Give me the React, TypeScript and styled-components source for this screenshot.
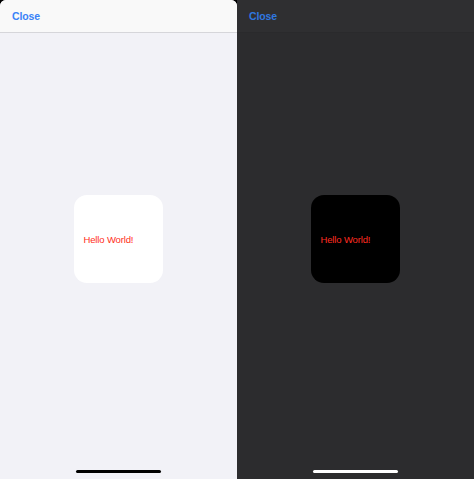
import * as React from "react";
import styled, { createGlobalStyle } from "styled-components";

const GlobalStyle = createGlobalStyle`
  html, body {
    margin: 0;
    padding: 0;
    background: #000000;
  }
  body {
    font-family: "Liberation Sans", Arial, sans-serif;
  }
`;

const Page = styled.div`
  display: flex;
  width: 474px;
  height: 479px;
  overflow: hidden;
`;

const Screen = styled.div<{ $dark?: boolean }>`
  width: 237px;
  height: 479px;
  display: flex;
  flex-direction: column;
  background: ${(p) => (p.$dark ? "#2c2c2e" : "#f2f2f7")};
  border-top-left-radius: ${(p) => (p.$dark ? "0" : "6px")};
  border-top-right-radius: ${(p) => (p.$dark ? "0" : "6px")};
  overflow: hidden;
`;

const Header = styled.div<{ $dark?: boolean }>`
  height: 32px;
  flex-shrink: 0;
  display: flex;
  align-items: center;
  padding-left: 12px;
  background: ${(p) => (p.$dark ? "#2f2f31" : "#f9f9f9")};
  border-bottom: 1px solid ${(p) => (p.$dark ? "#2a2a2c" : "#d6d6da")};
`;

const CloseButton = styled.div<{ $dark?: boolean }>`
  font-size: 10.5px;
  font-weight: 700;
  color: ${(p) => (p.$dark ? "#2f78e0" : "#3a82f7")};
  letter-spacing: -0.1px;
`;

const Body = styled.div`
  flex: 1;
  display: flex;
  flex-direction: column;
  align-items: center;
  padding-top: 162px;
`;

const Card = styled.div<{ $dark?: boolean }>`
  width: 89px;
  height: 88px;
  margin-right: 1px;
  border-radius: 13px;
  background: ${(p) => (p.$dark ? "#000000" : "#ffffff")};
  display: flex;
  align-items: center;
  padding-left: 10px;
  box-sizing: border-box;
`;

const Hello = styled.div`
  font-size: 9.5px;
  letter-spacing: -0.15px;
  color: #ff2d20;
  margin-top: 1px;
`;

const Spacer = styled.div`
  flex: 1;
`;

const HomeIndicator = styled.div<{ $dark?: boolean }>`
  width: 85px;
  height: 3px;
  border-radius: 2px;
  margin: 0 auto 6px;
  background: ${(p) => (p.$dark ? "#ffffff" : "#000000")};
`;

const Modal = ({ dark }: { dark?: boolean }) => (
  <Screen $dark={dark}>
    <Header $dark={dark}>
      <CloseButton $dark={dark}>Close</CloseButton>
    </Header>
    <Body>
      <Card $dark={dark}>
        <Hello>Hello World!</Hello>
      </Card>
      <Spacer />
      <HomeIndicator $dark={dark} />
    </Body>
  </Screen>
);

const App = () => {
  return (
    <>
      <GlobalStyle />
      <Page>
        <Modal />
        <Modal dark />
      </Page>
    </>
  );
};

export default App;
